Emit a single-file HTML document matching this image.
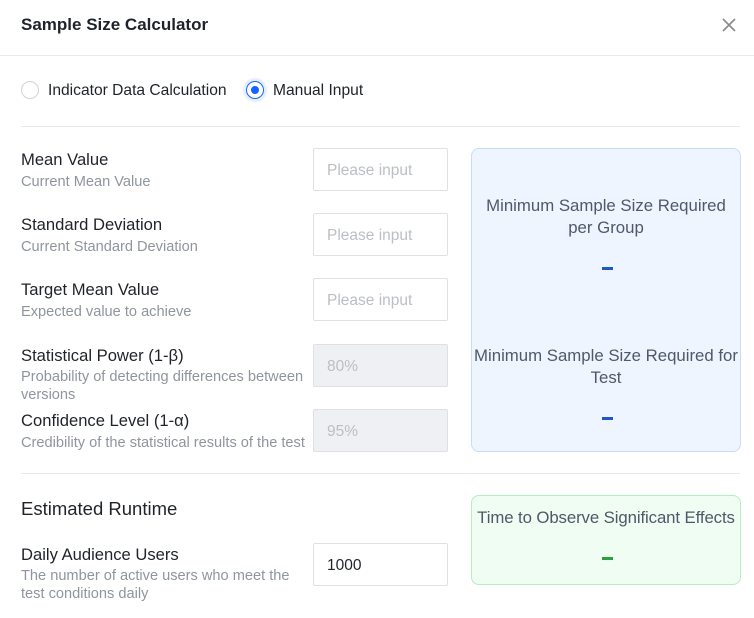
<!DOCTYPE html>
<html><head><meta charset="utf-8"><style>
*{margin:0;padding:0;box-sizing:border-box}
body{width:754px;height:618px;background:#fff;font-family:"Liberation Sans",sans-serif;position:relative;overflow:hidden;color:#1f2329}
.a{position:absolute;white-space:nowrap}
.t{font-size:16.6px;color:#1f2329}
.s{font-size:14.6px;color:#8f959e;line-height:18px}
.in{position:absolute;left:313px;width:135px;height:43px;border:1px solid #dee0e3;border-radius:2px;font-size:15.5px;color:#bbbfc4;padding:13px 0 0 13px}
.dis{background:#eff0f4}
.hr{position:absolute;height:1px;background:#e8e9eb}
.box{position:absolute;left:471px;width:270px;border-radius:8px;text-align:center;font-size:16.8px;color:#4e5969;line-height:22px}
.dash{position:absolute;left:130px;width:11px;height:3px}
</style></head><body>
<div class="a" style="left:21px;top:15px;font-size:17px;font-weight:bold;color:#1f2329">Sample Size Calculator</div>
<svg class="a" style="left:722px;top:18px" width="14" height="14" viewBox="0 0 14 14"><path d="M1 1L13 13M13 1L1 13" stroke="#8a8a8a" stroke-width="1.6"/></svg>
<div class="hr" style="left:0;top:55px;width:754px"></div>
<div class="a" style="left:21px;top:81px;width:18px;height:18px;border:1px solid #d0d3d6;border-radius:50%"></div>
<div class="a t" style="left:48px;top:82px;font-size:15.6px">Indicator Data Calculation</div>
<div class="a" style="left:243px;top:78px;width:24px;height:24px;border-radius:50%;background:#e6efff"></div>
<div class="a" style="left:246px;top:81px;width:18px;height:18px;border:1.5px solid #1664ff;border-radius:50%;background:#fff"></div>
<div class="a" style="left:251px;top:86px;width:8px;height:8px;border-radius:50%;background:#1664ff"></div>
<div class="a t" style="left:273px;top:82px;font-size:15.6px">Manual Input</div>
<div class="hr" style="left:21px;top:126px;width:719px"></div>

<div class="a t" style="left:21px;top:150px">Mean Value</div>
<div class="a s" style="left:21px;top:173px">Current Mean Value</div>
<div class="in" style="top:148px">Please input</div>
<div class="a t" style="left:21px;top:215px">Standard Deviation</div>
<div class="a s" style="left:21px;top:238px">Current Standard Deviation</div>
<div class="in" style="top:213px">Please input</div>
<div class="a t" style="left:21px;top:280px">Target Mean Value</div>
<div class="a s" style="left:21px;top:303px">Expected value to achieve</div>
<div class="in" style="top:278px">Please input</div>
<div class="a t" style="left:21px;top:346px">Statistical Power (1-β)</div>
<div class="a s" style="left:21px;top:368px">Probability of detecting differences between<br>versions</div>
<div class="in dis" style="top:344px">80%</div>
<div class="a t" style="left:21px;top:411px">Confidence Level (1-α)</div>
<div class="a s" style="left:21px;top:434px">Credibility of the statistical results of the test</div>
<div class="in dis" style="top:409px">95%</div>

<div class="box" style="top:148px;height:304px;background:#eff5ff;border:1px solid #c9dcfb">
<div style="position:absolute;top:46px;left:0;right:0">Minimum Sample Size Required<br>per Group</div>
<div class="dash" style="top:118px;background:#1f57c6"></div>
<div style="position:absolute;top:196px;left:0;right:0">Minimum Sample Size Required for<br>Test</div>
<div class="dash" style="top:268px;background:#1f57c6"></div>
</div>

<div class="hr" style="left:21px;top:473px;width:719px"></div>
<div class="a" style="left:21px;top:498px;font-size:18.5px;color:#1f2329">Estimated Runtime</div>
<div class="a t" style="left:21px;top:545px">Daily Audience Users</div>
<div class="a s" style="left:21px;top:567px">The number of active users who meet the<br>test conditions daily</div>
<div class="in" style="top:543px;color:#1f2329">1000</div>
<div class="box" style="top:495px;height:90px;background:#f0fdf2;border:1px solid #b4edbe">
<div style="position:absolute;top:11px;left:0;right:0;letter-spacing:-0.1px">Time to Observe Significant Effects</div>
<div class="dash" style="top:61px;background:#2ea043"></div>
</div>
</body></html>
